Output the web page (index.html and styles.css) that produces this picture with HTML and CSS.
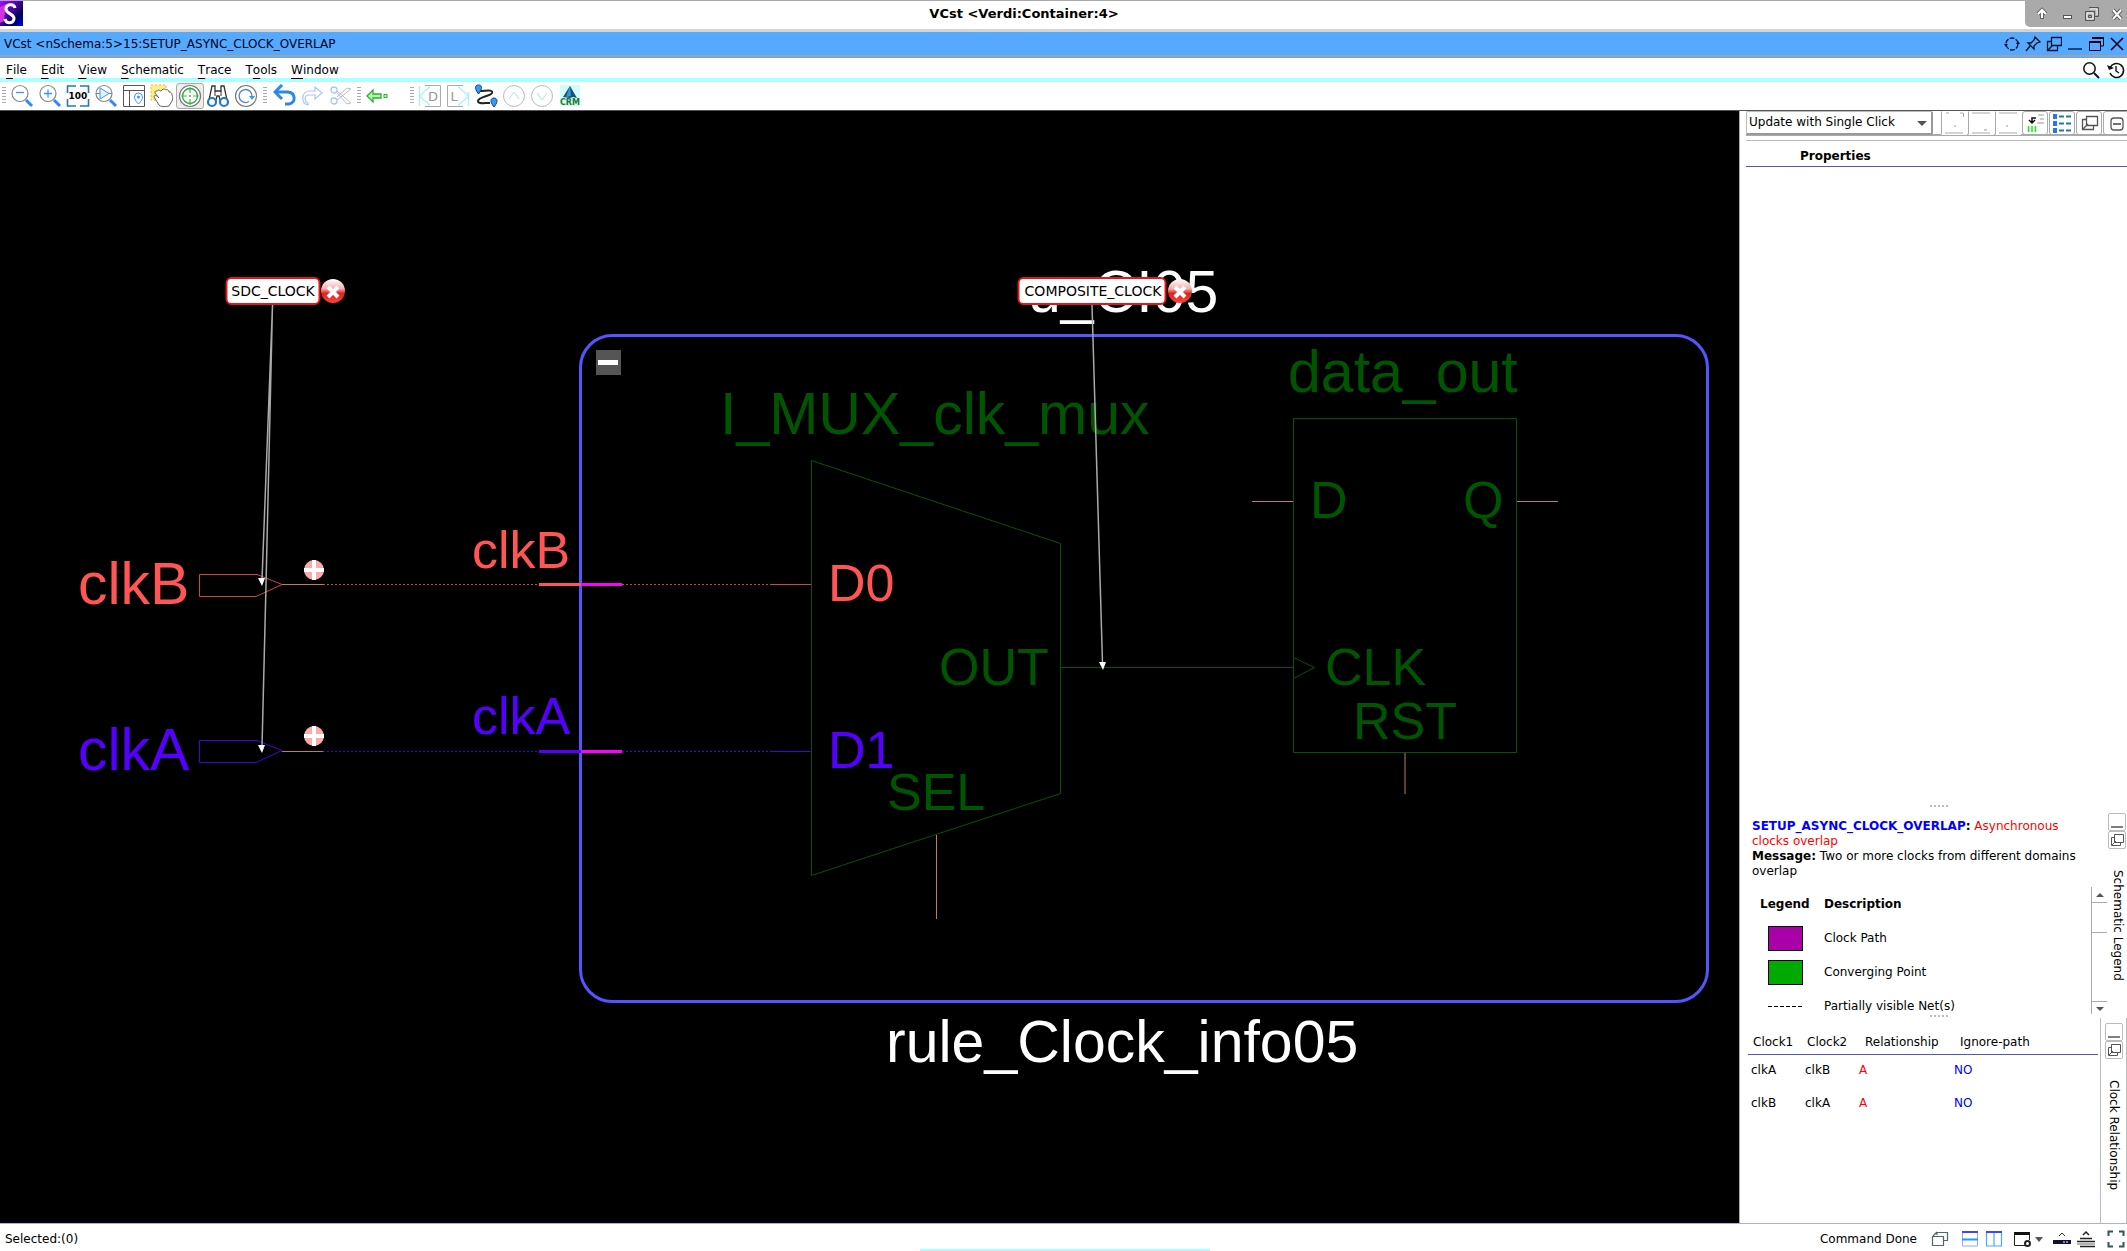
FILE: index.html
```html
<!DOCTYPE html>
<html lang="en">
<head>
<meta charset="utf-8">
<title>VCst &lt;Verdi:Container:4&gt;</title>
<link rel="stylesheet" href="styles.css">
</head>
<body>
<div class="app">
  <header class="window-bar">
    <svg class="logo" width="23" height="25" viewBox="0 0 23 25" aria-hidden="true">
      <defs><linearGradient id="lg" x1="0" y1="0" x2="1" y2="1"><stop offset="0" stop-color="#a010ff"/><stop offset=".4" stop-color="#5500aa"/><stop offset=".7" stop-color="#000055"/><stop offset="1" stop-color="#0000ff"/></linearGradient></defs>
      <rect width="23" height="25" fill="url(#lg)"/>
      <path d="M0 6 6 3 4 20 0 22Z" fill="#d030e0"/>
      <path d="M15 7C14 2 6 3 6 8c0 5 9 5 8 10-1 5-8 5-9 0" fill="none" stroke="#fff" stroke-width="3"/>
    </svg>
    <h1 class="window-title">VCst &lt;Verdi:Container:4&gt;</h1>
    <div class="window-controls">
      <button aria-label="Shade"><svg width="14" height="14" viewBox="0 0 14 14"><path d="M7 2v10M3 7l4-4 4 4" fill="none" stroke="#666" stroke-width="4"/><path d="M7 3v8M3 7l4-4 4 4" fill="none" stroke="#fff" stroke-width="2"/></svg></button>
      <button aria-label="Minimize"><svg width="14" height="14" viewBox="0 0 14 14"><rect x="3.500" y="8.500" width="8" height="3" fill="#fff" stroke="#555"/></svg></button>
      <button aria-label="Restore"><svg width="14" height="14" viewBox="0 0 14 14"><path d="M4 .5h9.500v9H10M.5 4.500h9v9h-9z" fill="none" stroke="#555"/><path d="M5 2h7v6M2 6h6v6H2z" fill="none" stroke="#fff"/><path d="M3.500 8.500h3v2h-3z" fill="none" stroke="#555"/></svg></button>
      <button aria-label="Close"><svg width="14" height="14" viewBox="0 0 14 14"><path d="M3 3l8 9M11 3l-8 9" stroke="#555" stroke-width="4"/><path d="M3 3l8 9M11 3l-8 9" stroke="#fff" stroke-width="2"/></svg></button>
    </div>
  </header>

  <div class="doc-bar">
    <h2 class="doc-title">VCst &lt;nSchema:5&gt;15:SETUP_ASYNC_CLOCK_OVERLAP</h2>
    <div class="doc-controls">
      <button aria-label="Refresh"><svg width="16" height="16" viewBox="0 0 16 16"><circle cx="8" cy="8" r="6" fill="none" stroke="#113" stroke-width="1.300" stroke-dasharray="5 1.280"/><path d="M0 8h4L2 11zM12 8h4l-2-3z" fill="#113"/></svg></button>
      <button aria-label="Pin"><svg width="16" height="16" viewBox="0 0 16 16"><path d="M10 1l5 5-3 1-3 3v3L3 7h3l3-3zM5 10l-4 5" fill="none" stroke="#112" stroke-width="1.300"/></svg></button>
      <button aria-label="Undock"><svg width="16" height="16" viewBox="0 0 16 16"><path d="M5.500 1.500h10v8h-10zM5 5.500H1.500v9h10V10M2 14l4-4" fill="none" stroke="#113" stroke-width="1.300"/></svg></button>
      <button aria-label="Minimize"><svg width="16" height="16" viewBox="0 0 16 16"><path d="M1 13h14" stroke="#124" stroke-width="1.500"/></svg></button>
      <button aria-label="Restore"><svg width="16" height="16" viewBox="0 0 16 16"><path d="M4 1h12v2H4zM1 5h12v2H1z" fill="#001"/><path d="M15.500 2v8H13M1.500 6v8.500h11V6" fill="none" stroke="#001"/></svg></button>
      <button aria-label="Close"><svg width="16" height="16" viewBox="0 0 16 16"><path d="M2 2l12 12M14 2L2 14" stroke="#002" stroke-width="1.600"/></svg></button>
    </div>
  </div>

  <nav class="menu-bar">
    <button><u>F</u>ile</button><button><u>E</u>dit</button><button><u>V</u>iew</button><button><u>S</u>chematic</button><button><u>T</u>race</button><button>T<u>o</u>ols</button><button><u>W</u>indow</button>
    <span class="spacer"></span>
    <button class="icon" aria-label="Search"><svg width="18" height="18" viewBox="0 0 18 18"><circle cx="7.500" cy="7.500" r="5.700" fill="none" stroke="#111" stroke-width="1.500"/><path d="M12 12l5 5" stroke="#113" stroke-width="2"/></svg></button>
    <button class="icon" aria-label="History"><svg width="18" height="18" viewBox="0 0 18 18"><path d="M3 7a7 7 0 1 1 0 5" fill="none" stroke="#111" stroke-width="1.600"/><path d="M0 4l2 5 5-2z" fill="#111"/><path d="M9 5v5l3 2" fill="none" stroke="#111" stroke-width="1.400"/></svg></button>
  </nav>

  <div class="toolbar">
    <span class="grip"></span>
    <button aria-label="Zoom out"><svg width="24" height="24" viewBox="0 0 24 24"><circle cx="10" cy="9.500" r="8" fill="#fff" stroke="#888" stroke-width="1.200"/><path d="M6 8.500h8" stroke="#39f" stroke-width="1.300"/><path d="M16 16l6 6" stroke="#2b8cf5" stroke-width="3"/></svg></button>
    <button aria-label="Zoom in"><svg width="24" height="24" viewBox="0 0 24 24"><circle cx="10" cy="9.500" r="8" fill="#fff" stroke="#888" stroke-width="1.200"/><path d="M6 9.500h8M10 5.500v8" stroke="#39f" stroke-width="1.300"/><path d="M16 16l6 6" stroke="#2b8cf5" stroke-width="3"/></svg></button>
    <button aria-label="Zoom to 100%"><svg width="24" height="24" viewBox="0 0 24 24"><path d="M10 2H1.500v7M1.500 15v7H10M14 2h8.500v7M22.500 15v7H14" fill="none" stroke="#27b" stroke-width="1.600"/><text x="12" y="15" text-anchor="middle" class="t-100">100</text></svg></button>
    <button aria-label="Zoom selected"><svg width="24" height="24" viewBox="0 0 24 24"><circle cx="10" cy="9.500" r="8" fill="#fff" stroke="#888" stroke-width="1.200"/><path d="M6 4l9 5.500L6 15zM15 9.500h3M2 9.500h4" fill="#e8f4ff" stroke="#39f"/><path d="M16 16l6 6" stroke="#2b8cf5" stroke-width="3"/></svg></button>
    <button aria-label="Overview"><svg width="24" height="24" viewBox="0 0 24 24"><path d="M1.500 1.500h21v21h-21zM1.500 6.500h21M7.500 6.500v16" fill="#fff" stroke="#555"/><path d="M16.500 20c-3-3-4-5-4-7a4 4 0 0 1 8 0c0 2-1 4-4 7z" fill="#fff" stroke="#39f"/><circle cx="16.500" cy="13" r="1.500" fill="#39f"/></svg></button>
    <button aria-label="Pan"><svg width="24" height="24" viewBox="0 0 24 24"><rect x="1" y="1" width="15" height="15" fill="#fe8" stroke="#fa3" stroke-dasharray="2 2"/><path d="M7 7c2-2 3 0 4 0l2-2c1 0 2 0 3 1 1-1 3 0 3 2 2 0 3 1 3 3 1 2 1 3 0 6l-3 5c-5 1-8 1-10-1l-5-8c0-2 1-2 3-1l2 2-4-5c0-2 0-2 2-2z" fill="#fff" stroke="#666"/></svg></button>
    <button aria-label="Trace mode" aria-pressed="true" class="pressed"><svg width="24" height="24" viewBox="0 0 24 24"><circle cx="12" cy="12" r="10.500" fill="#fff" stroke="#777" stroke-width="1.200"/><circle cx="12" cy="12" r="7.500" fill="none" stroke="#2a3" stroke-width="1.300"/><path d="M12 3v6M12 15v6M3 12h6M15 12h6M11 12h2M12 11v2" stroke="#4b4" stroke-width="1.200"/></svg></button>
    <button aria-label="Find"><svg width="24" height="24" viewBox="0 0 24 24"><path d="M6 2h3v5h6V2h3l3 14h-7l-1-4h-2l-1 4H3z" fill="#fff" stroke="#333" stroke-width="1.300"/><path d="M9 7v5M15 7v5" stroke="#333"/><circle cx="6" cy="18" r="4" fill="#fff" stroke="#27c" stroke-width="2.200"/><circle cx="18" cy="18" r="4" fill="#fff" stroke="#27c" stroke-width="2.200"/></svg></button>
    <button aria-label="Redraw"><svg width="24" height="24" viewBox="0 0 24 24"><circle cx="12" cy="12" r="10.500" fill="#fff" stroke="#777" stroke-width="1.200"/><path d="M15 17.500a6.500 6.500 0 1 1 3-5" fill="none" stroke="#48c" stroke-width="1.300"/><path d="M15 12h6l-3 4z" fill="#39f"/></svg></button>
    <span class="grip wide"></span>
    <button aria-label="Undo"><svg width="24" height="24" viewBox="0 0 24 24"><path d="M3 8h12c8 1 8 11 1 12h-4" fill="none" stroke="#2a88e8" stroke-width="3"/><path d="M9 1L2 8l7 7" fill="none" stroke="#2a88e8" stroke-width="3"/></svg></button>
    <button aria-label="Redo" disabled><svg width="24" height="24" viewBox="0 0 24 24"><path d="M14 3l7 6-7 6v-4H8c-5 0-5 6-1 8v2C-1 19 1 7 8 7h6z" fill="none" stroke="#aac4ff" stroke-width="1.200"/></svg></button>
    <button aria-label="Cut" disabled><svg width="24" height="24" viewBox="0 0 24 24"><circle cx="5" cy="6" r="3" fill="none" stroke="#aac4ff" stroke-width="1.300"/><circle cx="5" cy="17" r="3" fill="none" stroke="#aac4ff" stroke-width="1.300"/><path d="M8 7l14 12-4 1L8 9M8 16L22 5l-4-1L8 13" fill="none" stroke="#bbc"/></svg></button>
    <span class="grip"></span>
    <button aria-label="Back"><svg width="24" height="24" viewBox="0 0 24 24"><path d="M2 12l6-6v4h8v4H8v4z" fill="#afa" stroke="#3a3" stroke-width="1.300"/><rect x="19" y="10.500" width="3" height="3" fill="#cfc" stroke="#3a3"/></svg></button>
    <span class="grip last"></span>
    <button aria-label="Driver" disabled><svg width="24" height="24" viewBox="0 0 24 24"><path d="M7 1.500h15.500v21H7" fill="none" stroke="#aaa"/><path d="M1.500 12L12 2.500M1.500 12L12 21.500M1.500 2v20" fill="none" stroke="#acf0f8" stroke-width="1.300"/><text x="15" y="17" text-anchor="middle" class="t-letter">D</text></svg></button>
    <button aria-label="Load" disabled><svg width="24" height="24" viewBox="0 0 24 24"><path d="M17 1.500H1.500v21H17" fill="none" stroke="#aaa"/><path d="M22.500 12L12 2.500M22.500 12L12 21.500M22.500 8v14" fill="none" stroke="#acf0f8" stroke-width="1.300"/><text x="8" y="17" text-anchor="middle" class="t-letter">L</text></svg></button>
    <button aria-label="Trace path"><svg width="24" height="24" viewBox="0 0 24 24"><path d="M6 7c6 0 13-2 12 2-1 3-14 4-14 8 0 3 5 2 12 2" fill="none" stroke="#222" stroke-width="2"/><path d="M4.500 10C0 4 1 1 4.500 1S9 4 4.500 10zM20 23c-5-6-3-9 0-9s5 3 0 9z" fill="#39f" stroke="#148"/></svg></button>
    <button aria-label="Up" disabled><svg width="24" height="24" viewBox="0 0 24 24"><circle cx="12" cy="12" r="10.500" fill="#fff" stroke="#bbb"/><path d="M7 15l5-7 5 7" fill="none" stroke="#acdff8"/></svg></button>
    <button aria-label="Down" disabled><svg width="24" height="24" viewBox="0 0 24 24"><circle cx="12" cy="12" r="10.500" fill="#fff" stroke="#bbb"/><path d="M7 9l5 7 5-7" fill="none" stroke="#acdff8"/></svg></button>
    <button aria-label="CRM"><svg width="24" height="24" viewBox="0 0 24 24"><rect x="2" y="1" width="20" height="21" fill="#d5fafa"/><path d="M12 2l7 12-4-1-3 1-7-1z" fill="#145080"/><path d="M12 2L8 13l5-1z" fill="#39c"/><text x="12" y="21" text-anchor="middle" class="t-crm">CRM</text></svg></button>
  </div>

  <main class="work">
    <svg class="schematic" viewBox="0 111 1739 1112" role="img" aria-label="Schematic of rule_Clock_info05">
      <defs>
        <linearGradient id="ball" x1="0" y1="0" x2="0" y2="1"><stop offset="0" stop-color="#fff"/><stop offset=".4" stop-color="#f6b0b0"/><stop offset=".6" stop-color="#d22"/><stop offset="1" stop-color="#f43"/></linearGradient>
        <g id="close-ball"><circle r="12" fill="url(#ball)"/><path d="M-5-4L5 6M5-4L-5 6" stroke="#fff" stroke-width="4"/></g>
        <g id="plus-ball"><circle r="10" fill="#faa"/><path d="M-10 0h20M0-10v20" stroke="#fff" stroke-width="4"/></g>
        <path id="port" d="M.5-10.500H58L83-.5 57 11.500H.5Z"/>
      </defs>

      <rect class="module" x="580.500" y="335.500" width="1127" height="666" rx="32"/>
      <rect x="596" y="350" width="25" height="25" fill="#555"/><rect x="598" y="360" width="20" height="5" fill="#fff"/>
      <text class="name white" x="1028" y="312">u_CI05</text>
      <text class="name white" x="886" y="1062">rule_Clock_info05</text>

      <g class="cell">
        <path d="M811.500 460.500L1060.500 543.500V793.500L811.500 875.500Z"/>
        <path d="M1060 667.500h234"/>
        <path d="M1293.500 418.500h223v334h-223zM1293.500 657.500l21 10-21 11"/>
      </g>
      <g class="stub"><path d="M936.500 835v84M1252 501.500h41M1517 501.500h41M1405 753v41M282 584.500h41M282 751.500h41"/></g>
      <text class="name green" x="720" y="434">I_MUX_clk_mux</text>
      <text class="name green" x="1288" y="392">data_out</text>
      <text class="pin red" x="828" y="601">D0</text>
      <text class="pin violet" x="828" y="768">D1</text>
      <text class="pin green" x="939" y="685">OUT</text>
      <text class="pin green" x="887" y="810">SEL</text>
      <text class="pin green" x="1310" y="518">D</text>
      <text class="pin green" x="1463" y="518">Q</text>
      <text class="pin green" x="1325" y="685">CLK</text>
      <text class="pin green" x="1353" y="739">RST</text>

      <text class="name red" x="78" y="604">clkB</text>
      <text class="name violet" x="78" y="770">clkA</text>
      <text class="pin red" x="472" y="568">clkB</text>
      <text class="pin violet" x="472" y="734">clkA</text>

      <g class="net net-b">
        <use href="#port" x="199" y="585"/>
        <path d="M323 584.500h216M622 584.500h148" stroke-dasharray="2 2"/>
        <path d="M770 584.500h41"/>
      </g>
      <g class="net net-a">
        <use href="#port" x="199" y="751"/>
        <path d="M323 751.500h216M622 751.500h148" stroke-dasharray="2 2"/>
        <path d="M770 751.500h41"/>
      </g>
      <g stroke-width="3">
        <path d="M539 584.500h42" stroke="#f55"/><path d="M539 751.500h42" stroke="#50f"/>
        <path d="M581 584.500h41M581 751.500h41" stroke="#f0f"/>
      </g>

      <g class="callout-line">
        <path d="M272.500 305L262 580M272.500 305L266 585L262 747M1092 305L1102.500 663"/>
        <path class="head" d="M258 578h7l-3 8zM258 745h7l-3 8zM1099 662h7l-3 8z"/>
      </g>
      <use href="#plus-ball" x="314" y="570"/>
      <use href="#plus-ball" x="314" y="736"/>
      <g class="callout">
        <rect x="226.500" y="278" width="93" height="26" rx="5"/><text x="273" y="296" text-anchor="middle">SDC_CLOCK</text>
        <rect x="1018.500" y="278" width="147" height="26" rx="5"/><text x="1093" y="296" text-anchor="middle">COMPOSITE_CLOCK</text>
      </g>
      <use href="#close-ball" x="333" y="291"/>
      <use href="#close-ball" x="1180" y="291"/>
    </svg>

    <aside class="side">
      <section class="properties">
        <div class="prop-tools">
          <span class="combo"><select aria-label="Update mode"><option>Update with Single Click</option></select></span>
          <button class="ghost" disabled aria-label="Previous"><svg width="22" height="22" viewBox="0 0 22 22"><path d="M3 1h3M17 1h3M2 21h18M20.500 1v4" stroke="#aaa"/><path d="M11 14h2" stroke="#999"/></svg></button>
          <button class="ghost" disabled aria-label="Next"><svg width="22" height="22" viewBox="0 0 22 22"><path d="M2 1h18M2 21h18" stroke="#aaa"/><path d="M14 18h3" stroke="#999"/></svg></button>
          <button class="ghost" disabled aria-label="Copy"><svg width="22" height="22" viewBox="0 0 22 22"><path d="M2 1h18M2 21h18" stroke="#aaa"/><path d="M9 14h2" stroke="#999"/></svg></button>
          <button aria-label="Fan in"><svg width="22" height="22" viewBox="0 0 22 22"><path d="M12 6H8v5M5 8l3 3 3-3" fill="none" stroke="#111" stroke-width="1.500"/><path d="M14 3h6M16 7h4M13 11h7" stroke="#999"/><path d="M4.500 14v6M8 14v6M11.500 14v6" stroke="#1e1" stroke-width="1.500"/></svg></button>
          <button aria-label="List"><svg width="22" height="22" viewBox="0 0 22 22"><path d="M4 2v5M4 9v5M4 16v5" stroke="#27e" stroke-width="4"/><path d="M8 4.500h12M8 11.500h12M8 18.500h12" stroke="#27a" stroke-width="1.800" stroke-dasharray="5 2"/></svg></button>
          <button aria-label="Undock"><svg width="22" height="22" viewBox="0 0 22 22"><path d="M8.500 4.500h11v9h-11zM8 7.500H4.500v10h11V14M5 17l5-5" fill="none" stroke="#555" stroke-width="1.300"/></svg></button>
          <button aria-label="Collapse"><svg width="22" height="22" viewBox="0 0 22 22"><rect x="6" y="6" width="12" height="12" rx="3" fill="#fff" stroke="#555" stroke-width="1.300"/><path d="M8 12h8" stroke="#444" stroke-width="1.500"/></svg></button>
        </div>
        <h3 class="prop-head">Properties</h3>
      </section>

      <section class="dock legend">
        <span class="splitter"></span>
        <div class="dock-body">
          <p class="message"><b class="blue">SETUP_ASYNC_CLOCK_OVERLAP</b><b>:</b> <span class="alert">Asynchronous clocks overlap</span><br><b>Message:</b> Two or more clocks from different domains overlap</p>
          <div class="scroll">
            <table class="legend-table">
              <thead><tr><th>Legend</th><th>Description</th></tr></thead>
              <tbody>
                <tr><td><span class="swatch clock-path"></span></td><td>Clock Path</td></tr>
                <tr><td><span class="swatch converging"></span></td><td>Converging Point</td></tr>
                <tr><td><span class="dashes"></span></td><td>Partially visible Net(s)</td></tr>
              </tbody>
            </table>
            <div class="scrollbar"><button aria-label="Scroll up" class="up"></button><span class="thumb"></span><button aria-label="Scroll down" class="down"></button></div>
          </div>
        </div>
        <div class="tab">
          <button aria-label="Minimize legend"><svg width="16" height="16" viewBox="0 0 16 16"><path d="M2 13h12" stroke="#555" stroke-width="1.500"/></svg></button>
          <button aria-label="Undock legend"><svg width="16" height="16" viewBox="0 0 16 16"><path d="M5.500 2.500h9v8h-9zM5 5.500H2.500v8h9V11M3 13l4-4" fill="none" stroke="#555"/></svg></button>
          <span>Schematic Legend</span>
        </div>
      </section>

      <section class="dock clocks">
        <span class="splitter"></span>
        <div class="dock-body">
          <table class="clock-table">
            <thead><tr><th>Clock1</th><th>Clock2</th><th>Relationship</th><th>Ignore-path</th></tr></thead>
            <tbody>
              <tr><td>clkA</td><td>clkB</td><td class="alert">A</td><td class="blue">NO</td></tr>
              <tr><td>clkB</td><td>clkA</td><td class="alert">A</td><td class="blue">NO</td></tr>
            </tbody>
          </table>
        </div>
        <div class="tab">
          <button aria-label="Minimize clocks"><svg width="16" height="16" viewBox="0 0 16 16"><path d="M2 13h12" stroke="#555" stroke-width="1.500"/></svg></button>
          <button aria-label="Undock clocks"><svg width="16" height="16" viewBox="0 0 16 16"><path d="M5.500 2.500h9v8h-9zM5 5.500H2.500v8h9V11M3 13l4-4" fill="none" stroke="#555"/></svg></button>
          <span>Clock Relationship</span>
        </div>
      </section>
    </aside>
  </main>

  <footer class="status">
    <span>Selected:(0)</span>
    <span class="progress"></span>
    <span class="done">Command Done</span>
    <div class="status-icons">
      <button aria-label="Windows" class="windows"><svg width="18" height="18" viewBox="0 0 18 18"><path d="M6 5V2.500h10.500v8H13M1.500 6.500h11v9h-11zM2 6l4-4" fill="none" stroke="#566" stroke-width="1.200"/></svg></button>
      <button aria-label="Split rows"><svg width="18" height="18" viewBox="0 0 18 18"><path d="M1.500 2v14h15V2z" fill="none" stroke="#8af"/><path d="M1 2h16" stroke="#44f" stroke-width="2"/><path d="M1 9.500h16" stroke="#29f" stroke-width="2"/></svg></button>
      <button aria-label="Split columns"><svg width="18" height="18" viewBox="0 0 18 18"><path d="M1.500 2v14h15V2zM9 2v14" fill="none" stroke="#4af" stroke-width="1.200"/><path d="M1 2h16" stroke="#44f" stroke-width="2"/></svg></button>
      <button aria-label="Layout" class="layout"><svg width="30" height="18" viewBox="0 0 30 18"><path d="M12 15.500H1.500V3h15v7" fill="none" stroke="#222"/><path d="M1 3.500h16" stroke="#111" stroke-width="3"/><circle cx="14.500" cy="13.500" r="2.500" fill="#fff" stroke="#222" stroke-width="2"/><path d="M22 7h8l-4 5z" fill="#555"/></svg></button>
      <button aria-label="Collapse"><svg width="18" height="18" viewBox="0 0 18 18"><path d="M6 6l3-3 3 3" fill="none" stroke="#235"/><path d="M0 12h18" stroke="#113" stroke-width="4"/><path d="M10 12h6" stroke="#fff" stroke-dasharray="2 1"/></svg></button>
      <button aria-label="Expand"><svg width="18" height="18" viewBox="0 0 18 18"><path d="M6 5l3-3 3 3" fill="none" stroke="#222" stroke-width="1.500"/><path d="M3 8.500h12M0 11.500h18M3 16.500h15" stroke="#222" stroke-width="1.500"/><path d="M0 14h18" stroke="#666"/></svg></button>
      <button aria-label="Full screen"><svg width="18" height="18" viewBox="0 0 18 18"><path d="M1.500 6V1.500H6M12 1.500h4.500V6M16.500 12v4.500H12M6 16.500H1.500V12" fill="none" stroke="#355" stroke-width="2"/></svg></button>
    </div>
  </footer>
</div>
</body>
</html>
```
FILE: styles.css
```css
* { box-sizing: border-box; }
body { margin: 0; background: #fff; color: #000; font: 12px/15px "DejaVu Sans", sans-serif; }
button { margin: 0; padding: 0; border: 0; background: none; color: inherit; font: inherit; display: flex; align-items: center; justify-content: center; }
svg { display: block; flex: none; }
h1, h2, h3, p { margin: 0; font-weight: normal; }
table { border-collapse: collapse; }
th, td { padding: 0; text-align: left; }
.app { display: flex; flex-direction: column; min-height: 100vh; overflow: hidden; }

/* window title */
.window-bar { display: flex; align-items: flex-start; height: 32px; border-top: 1px solid #aaa; border-bottom: 3px solid #d4d4d4; }
.window-title { flex: 1; padding-top: 5px; text-align: center; font-size: 13px; font-weight: bold; }
.window-controls { display: flex; height: 26px; padding: 0 3px 0 10px; gap: 11px; background: #aaa; border-bottom-left-radius: 5px; }

/* document title */
.doc-bar { display: flex; align-items: center; justify-content: space-between; height: 25px; padding: 0 2px 0 4px; background: #55aaff; border-bottom: 2px solid #a0a0a8; }
.doc-title { padding-top: 2px; font-size: 12px; color: #002; }
.doc-controls { display: flex; gap: 5px; }

.menu-bar { display: flex; align-items: center; gap: 14px; height: 25px; padding: 3px 2px 0 6px; border-top: 1px solid #55aaff; border-bottom: 4px solid #aaffff; }
.menu-bar button { padding-top: 1px; }
.menu-bar u { text-underline-offset: 4px; }
.menu-bar .spacer { flex: 1; }
.menu-bar .icon { padding: 0; }
.menu-bar .icon + .icon { margin-left: -7px; }

.toolbar { display: flex; align-items: center; height: 29px; padding-bottom: 1px; border-bottom: 1px solid #555; }
.toolbar button { width: 28px; height: 26px; }
.toolbar .pressed { background: #eee; border: 1px solid #aaa; border-radius: 3px; }
.grip { width: 8px; height: 18px; border: solid #fff; border-width: 0 2px; background: repeating-linear-gradient(#aaa 0 1px, #fff 1px 3px); }
.grip.wide { width: 11px; border-width: 0 4px 0 3px; }
.grip.last { margin-left: 17px; }
.t-100 { font: bold 9px "DejaVu Sans", sans-serif; }
.t-letter { font: 13px "DejaVu Sans", sans-serif; fill: #999; }
.t-crm { font: bold 8px "DejaVu Sans", sans-serif; fill: #1a7a2a; }

.work { flex: 1; display: flex; min-height: 0; border-bottom: 1px solid #aaaaff; }
.schematic { flex: 1; min-width: 0; height: auto; background: #000; }
.module { fill: none; stroke: #5555ff; stroke-width: 3; }
.schematic text { font-family: "Liberation Sans", Arial, sans-serif; }
.schematic .name { font-size: 59px; }
.schematic .pin { font-size: 52px; }
.white { fill: #fff; }
.green { fill: #005500; }
.red { fill: #ff5555; }
.violet { fill: #5500ff; }
.cell path { fill: none; stroke: #005500; }
.stub path { stroke: #c08048; }
.net { fill: none; }
.net-b { stroke: #d04444; }
.net-a { stroke: #4400dd; }
.callout-line path { fill: none; stroke: #aaa; stroke-width: 1.5; }
.callout-line .head { fill: #fff; stroke: none; }
.callout rect { fill: #fff; stroke: #e01818; stroke-width: 2; }
.schematic .callout text { font: 14px "DejaVu Sans", sans-serif; }

.side { flex: none; width: 388px; display: flex; flex-direction: column; border-left: 1px solid #aaa; }
.properties { flex: 1; padding-left: 6px; }
.prop-tools { display: flex; height: 30px; border-bottom: 1px solid #bbb; overflow: hidden; box-shadow: inset 0 -4px #fff, inset 0 -6px #aaa; }
.combo { flex: none; position: relative; width: 187px; height: 24px; margin-right: 8px; border: 1px solid #bbb; border-bottom: 2px solid #999; border-right: 2px solid #999; border-radius: 2px; }
.combo select { appearance: none; width: 100%; height: 100%; padding: 0 2px; border: 0; background: none; font: inherit; color: #000; }
.combo::after { content: ""; position: absolute; right: 4px; top: 9px; border: solid transparent; border-width: 5px 5px 0; border-top-color: #555; }
.prop-tools button { flex: none; width: 26px; height: 24px; margin-right: 1px; border: 1px solid #aaa; border-radius: 3px; }
.prop-tools .ghost { border-color: #fff #fff #fff #aaa; border-radius: 0; }
.prop-head { height: 26px; padding: 8px 54px 0; border-bottom: 1px solid #5555bb; font-size: 12px; font-weight: bold; }

.dock { display: grid; grid-template-columns: 1fr auto; grid-template-rows: auto 1fr; flex: none; }
.splitter { grid-column: 1 / -1; justify-self: center; width: 20px; height: 2px; margin-left: 12px; background: repeating-linear-gradient(90deg, #bbb 0 2px, #fff 2px 4px); }
.legend { height: 213px; }
.legend .splitter { margin-top: 4px; margin-bottom: 6px; }
.message { height: 74px; padding: 6px 20px 0 12px; }
.blue { color: #00f; }
.alert { color: #f00; }
.dock-body { min-height: 0; overflow: hidden; }
.scroll { display: flex; justify-content: space-between; height: 129px; overflow: hidden; }
.legend-table { align-self: flex-start; }
.legend-table tr { height: 34px; }
.legend-table th:first-child { width: 84px; padding-left: 20px; }
.legend-table td:first-child { padding-left: 28px; }
.swatch { display: block; width: 35px; height: 25px; border: 1px solid #000; }
.clock-path { background: #aa00aa; }
.converging { background: #00aa00; }
.dashes { display: block; width: 35px; height: 1px; background: repeating-linear-gradient(90deg, #000 0 4px, #fff 4px 6px); }
.scrollbar { width: 16px; border-left: 1px solid #aaa; display: flex; flex-direction: column; justify-content: space-between; }
.scrollbar button { height: 15px; }
.scrollbar .thumb { height: 31px; margin-bottom: auto; border: solid #aaa; border-width: 1px 0; }
.scrollbar button::before { content: ""; border: solid transparent; border-width: 0 4px 4px; border-bottom-color: #555; }
.scrollbar .down { border-top: 1px solid #aaa; }
.scrollbar .down::before { border-width: 4px 4px 0; border-top-color: #555; }
.tab { display: flex; flex-direction: column; align-items: center; width: 20px; }
.tab button { width: 18px; height: 18px; border: 1px solid #bbb; border-radius: 2px; }
.tab span { writing-mode: vertical-rl; margin-top: 21px; white-space: nowrap; }
.clocks { height: 209px; }
.clocks .splitter { margin-top: 1px; margin-bottom: 1px; }
.clocks .tab { width: 27px; border: solid #bbb; border-width: 0 1px; padding-top: 5px; }
.clocks .dock-body { padding: 13px 2px 0 8px; }
.clock-table { width: 100%; table-layout: fixed; }
.clock-table thead tr { height: 23px; border-bottom: 1px solid #5555bb; }
.clock-table tbody tr { height: 33px; }
.clock-table th { font-weight: normal; padding-left: 5px; }
.clock-table td { padding-left: 3px; }
.clock-table th:nth-child(1), .clock-table th:nth-child(2) { width: 54px; }
.clock-table th:nth-child(3) { width: 95px; padding-left: 9px; }
.clock-table th:nth-child(4) { padding-left: 9px; }

.status { display: flex; align-items: center; height: 27px; padding: 3px 2px 0 5px; }
.progress { align-self: flex-end; width: 290px; height: 2px; margin: 0 auto 0 842px; background: #aaffff; }
.done { margin-right: 14px; }
.status-icons { display: flex; gap: 6px; }
.status-icons .windows { margin-right: 6px; }
.status-icons .layout { margin: 0 4px; }
.status-icons button:last-child { margin-left: 6px; }
```
